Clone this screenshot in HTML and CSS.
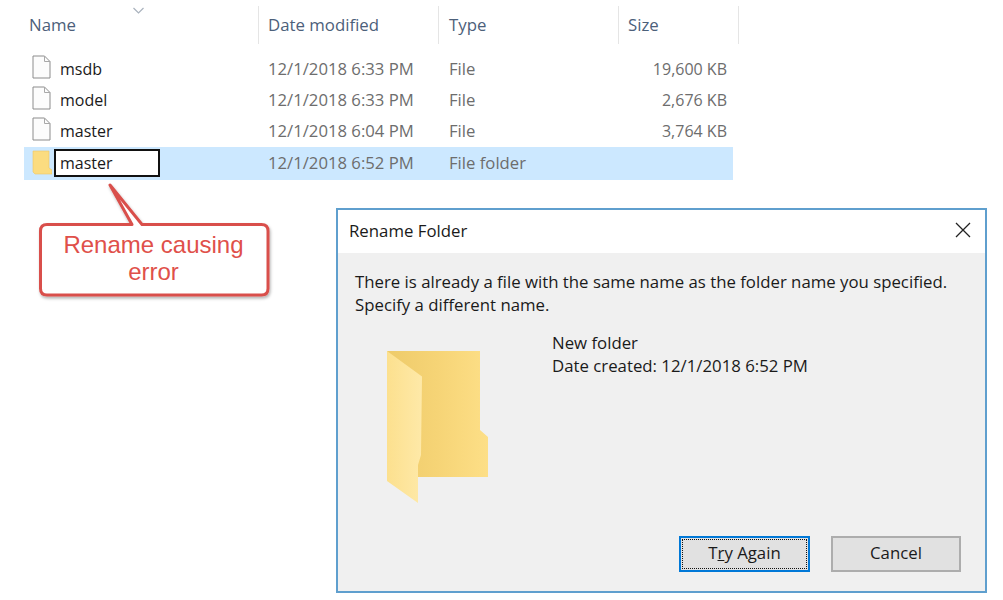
FILE: index.html
```html
<!DOCTYPE html>
<html lang="en">
<head>
    <meta charset="UTF-8">
    <title>Rename Folder</title>
    <link rel="stylesheet" href="styles.css">
</head>
<body>
    <div class="explorer">
        <div class="header-row">
            <svg class="sort-arrow" width="11" height="7" viewBox="0 0 11 7"><path d="M.5 1 5.500 6 10.500 1" fill="none" stroke="#a9b2bd" stroke-width="1.2"/></svg>
            <div class="head head-name">Name</div>
            <div class="head head-date">Date modified</div>
            <div class="head">Type</div>
            <div class="head head-size">Size</div>
        </div>
        <div class="file-row">
            <div class="cell-name">
                <svg class="file-icon" width="19" height="24" viewBox="0 0 19 24"><path d="M1 1H12.500L18 6.500V23H1Z" fill="#fcfcfc" stroke="#8c8c8c"/><path d="M12.500 1V6.500H18" fill="none" stroke="#a8a8a8"/></svg>
                <span>msdb</span>
            </div>
            <div class="cell">12/1/2018 6:33 PM</div>
            <div class="cell">File</div>
            <div class="cell-size">19,600 KB</div>
        </div>
        <div class="file-row">
            <div class="cell-name">
                <svg class="file-icon" width="19" height="24" viewBox="0 0 19 24"><path d="M1 1H12.500L18 6.500V23H1Z" fill="#fcfcfc" stroke="#8c8c8c"/><path d="M12.500 1V6.500H18" fill="none" stroke="#a8a8a8"/></svg>
                <span>model</span>
            </div>
            <div class="cell">12/1/2018 6:33 PM</div>
            <div class="cell">File</div>
            <div class="cell-size">2,676 KB</div>
        </div>
        <div class="file-row">
            <div class="cell-name">
                <svg class="file-icon" width="19" height="24" viewBox="0 0 19 24"><path d="M1 1H12.500L18 6.500V23H1Z" fill="#fcfcfc" stroke="#8c8c8c"/><path d="M12.500 1V6.500H18" fill="none" stroke="#a8a8a8"/></svg>
                <span>master</span>
            </div>
            <div class="cell">12/1/2018 6:04 PM</div>
            <div class="cell">File</div>
            <div class="cell-size">3,764 KB</div>
        </div>
        <div class="file-row selected">
            <div class="cell-name">
                <svg class="small-folder" width="20" height="25" viewBox="0 0 20 25"><path d="M1 1H17V18L20 20V24H3L1 22Z" fill="#fbdc80" stroke="#eec864" stroke-width="0.6"/></svg>
                <div class="rename-box">master</div>
            </div>
            <div class="cell">12/1/2018 6:52 PM</div>
            <div class="cell">File folder</div>
            <div class="cell-size"></div>
        </div>
    </div>

    <div class="callout">
        <svg width="240" height="122" viewBox="0 0 240 122">
            <defs>
                <filter id="calloutShadow" x="-5%" y="-5%" width="110%" height="115%">
                    <feDropShadow dx="1" dy="2" stdDeviation="1.500" flood-color="#000" flood-opacity="0.3"/>
                </filter>
            </defs>
            <path d="M12 42.500H97L75 3 107 42.500H226.500Q233 42.500 233 49V106.500Q233 113 226.500 113H12Q5.500 113 5.500 106.500V49Q5.500 42.500 12 42.500Z" fill="#fff" stroke="#d9504c" stroke-width="3" stroke-linejoin="round" filter="url(#calloutShadow)"/>
        </svg>
        <div class="callout-text">Rename causing<br>error</div>
    </div>

    <div class="dialog">
        <div class="dialog-title">
            <span class="dialog-caption">Rename Folder</span>
            <svg class="close-x" width="16" height="16" viewBox="0 0 16 16"><path d="M1 1 15 15M15 1 1 15" stroke="#222" stroke-width="1.300" fill="none"/></svg>
        </div>
        <div class="dialog-body">
            <p class="message">There is already a file with the same name as the folder name you specified.<br>Specify a different name.</p>
            <div class="details">
                <svg class="big-folder" width="116" height="156" viewBox="0 0 116 156">
                    <defs>
                        <linearGradient id="backFill" x1="0" y1="0" x2="1" y2="0">
                            <stop offset="0" stop-color="#eecb6a"/>
                            <stop offset="0.5" stop-color="#f6d476"/>
                            <stop offset="1" stop-color="#fddf87"/>
                        </linearGradient>
                        <linearGradient id="frontFill" x1="0" y1="0" x2="1" y2="0">
                            <stop offset="0" stop-color="#fce08e"/>
                            <stop offset="1" stop-color="#fee9a8"/>
                        </linearGradient>
                        <filter id="folderBlur"><feGaussianBlur stdDeviation="2"/></filter>
                    </defs>
                    <path d="M36 129H112" stroke="#cfcfcf" stroke-width="3" filter="url(#folderBlur)"/>
                    <path d="M1 2H94V81L102 88V128H32Z" fill="url(#backFill)"/>
                    <path d="M1 2 36 27.500 35 106 32 116V154L1 132Z" fill="url(#frontFill)"/>
                </svg>
                <div class="details-text">New folder<br>Date created: 12/1/2018 6:52 PM</div>
            </div>
            <div class="buttons">
                <button class="btn btn-default"><span class="focus-ring">T<u>r</u>y Again</span></button>
                <button class="btn">Cancel</button>
            </div>
        </div>
    </div>
</body>
</html>
```

FILE: styles.css
```css
body {
    margin: 0;
    width: 1003px;
    height: 600px;
    position: relative;
    overflow: hidden;
    background-color: #fff;
    font-family: "Open Sans", "Noto Sans", sans-serif;
    font-size: 16px;
}

.explorer {
    padding: 6px 0 0 24px;
}

.header-row {
    position: relative;
    display: grid;
    grid-template-columns: 235px 180px 180px 120px;
    height: 38px;
    margin-bottom: 10px;
}

.sort-arrow {
    position: absolute;
    left: 109px;
    top: 1px;
}

.head {
    display: flex;
    align-items: center;
    padding: 0 0 2px 10px;
    border-right: 1px solid #e5e5e5;
    font-size: 16.8px;
    color: #4c607a;
}

.head-name {
    padding-left: 5px;
}

.head-date {
    padding-left: 9px;
}

.head-size {
    padding-left: 9px;
}

.file-row {
    display: grid;
    grid-template-columns: 234px 181px 179px 115px;
    align-items: center;
    box-sizing: border-box;
    height: 31px;
    width: 709px;
    padding-bottom: 2px;
    color: #6d6d6d;
}

.file-row.selected {
    background-color: #cce8ff;
    height: 33px;
}

.cell {
    padding-left: 10px;
    font-size: 16.7px;
}

.cell-size {
    padding-right: 6px;
    text-align: right;
}

.cell-name {
    display: flex;
    align-items: center;
    color: #1a1a1a;
}

.file-icon {
    margin: 0 9px 3px 8px;
}

.small-folder {
    margin: 0 2px 0 8px;
}

.rename-box {
    width: 98px;
    height: 24px;
    line-height: 25px;
    margin-top: 1px;
    padding-left: 4px;
    background-color: #fff;
    border: 2px solid #111;
}

.callout {
    position: absolute;
    left: 35px;
    top: 182px;
    width: 240px;
    height: 122px;
}

.callout svg {
    display: block;
}

.callout-text {
    position: absolute;
    left: 5px;
    top: 49px;
    width: 227px;
    text-align: center;
    font-family: "Liberation Sans", Arial, sans-serif;
    font-size: 24px;
    line-height: 27px;
    color: #e0504a;
}

.dialog {
    position: absolute;
    left: 336px;
    top: 208px;
    width: 647px;
    height: 381px;
    display: flex;
    flex-direction: column;
    border: 2px solid #5f9fce;
    background-color: #f0f0f0;
    font-size: 16.8px;
    color: #1a1a1a;
}

.dialog-title {
    height: 39px;
    flex: none;
    display: flex;
    align-items: center;
    justify-content: space-between;
    padding: 0 14px 4px 11px;
    background-color: #fff;
}

.dialog-caption {
    margin-top: 2px;
}

.close-x {
    display: block;
}

.dialog-body {
    flex: 1;
    display: flex;
    flex-direction: column;
    padding: 17px 24px 19px 17px;
}

.message {
    margin: 0;
    line-height: 23px;
}

.details {
    display: flex;
    margin-top: 15px;
    padding-left: 31px;
}

.big-folder {
    flex: none;
    margin-top: 18px;
    margin-right: 50px;
}

.details-text {
    line-height: 23px;
}

.buttons {
    margin-top: auto;
    display: flex;
    justify-content: flex-end;
    gap: 21px;
}

.btn {
    width: 130px;
    height: 36px;
    padding: 0 0 4px;
    font: inherit;
    color: #1a1a1a;
    background-color: #e1e1e1;
    border: 2px solid #adadad;
}

.btn-default {
    width: 131px;
    border: 2px solid #0078d7;
    padding: 1px;
}

.focus-ring {
    display: flex;
    align-items: center;
    justify-content: center;
    height: 100%;
    padding-bottom: 3px;
    border: 1px dotted #111;
    box-sizing: border-box;
}
```
